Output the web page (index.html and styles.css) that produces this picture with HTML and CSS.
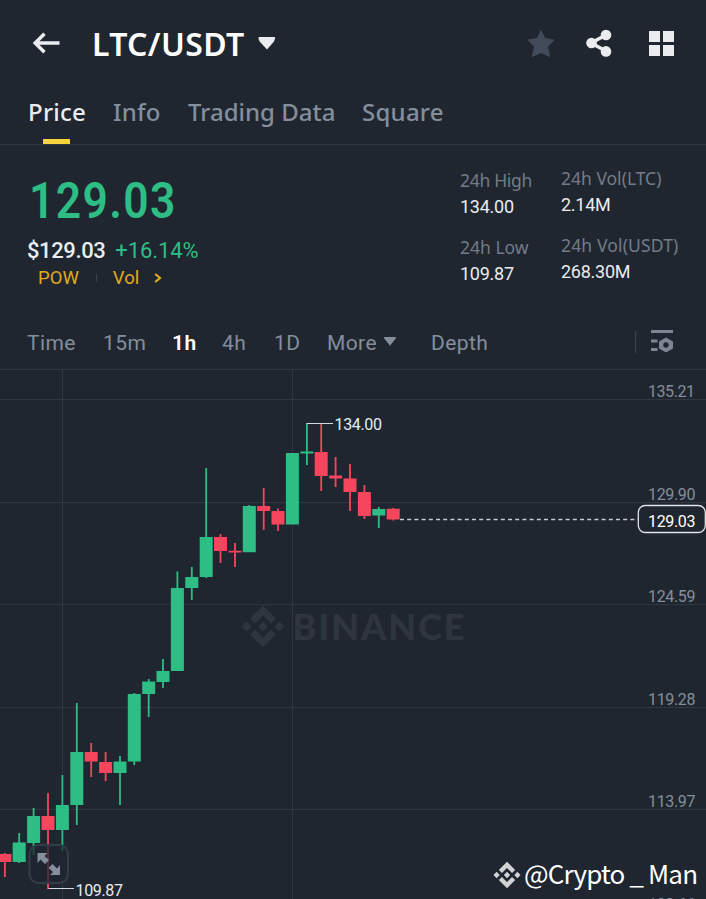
FILE: index.html
```html
<!DOCTYPE html>
<html lang="en">
<head>
<meta charset="utf-8">
<title>LTC/USDT</title>
<link rel="stylesheet" href="styles.css">
</head>
<body>
<header class="topbar">
  <svg class="back" viewBox="0 0 28 22" width="28" height="22"><path d="M27.500 11H3M12.500 1.800L3.200 11l9.300 9.200" fill="none" stroke="#eaecef" stroke-width="3.500"/></svg>
  <h1 class="pair">LTC/USDT</h1>
  <svg class="caret" viewBox="0 0 18 13" width="18" height="13"><path d="M1.500 0h14.800q1.500 0 .7 1.600L16 4.600 9 12.500 1.800 4.800.4 1.600Q0 0 1.500 0z" fill="#eaecef"/></svg>
  <div class="actions">
    <svg viewBox="0 0 28 28" width="28" height="28"><path d="M14 1.500l3.900 8 9 1.500-6.300 6.600 2.100 9.900-8.700-4-8.700 4 2.100-9.900L1.100 11l9-1.500z" fill="#414b5a" stroke="#414b5a" stroke-linejoin="round"/></svg>
    <svg viewBox="0 0 28 28" width="28" height="28"><path d="M21 6L6 14l15 8" fill="none" stroke="#eaecef" stroke-width="3.600"/><g fill="#eaecef"><circle cx="21" cy="6" r="5.300"/><circle cx="6.500" cy="14" r="5.300"/><circle cx="21" cy="22.400" r="5.300"/></g></svg>
    <svg viewBox="0 0 25 25" width="25" height="25"><path d="M0 0h11v11H0zM14 0h11v11H14zM0 14h11v11H0zM14 14h11v11H14z" fill="#eaecef"/></svg>
  </div>
</header>

<nav class="tabs">
  <a class="tab tab-active">Price</a>
  <a class="tab">Info</a>
  <a class="tab trading">Trading Data</a>
  <a class="tab">Square</a>
</nav>

<section class="ticker">
  <div class="quote">
    <div class="last">129.03</div>
    <div class="fiat"><span class="usd">$129.03</span><span class="change">+16.14%</span></div>
    <div class="tags"><span class="pow">POW</span><i class="tag-sep"></i><span>Vol</span><svg viewBox="0 0 8 10" width="8" height="10"><path d="M1.200 1L6 5 1.200 9" fill="none" stroke="#e0a91f" stroke-width="2.200"/></svg></div>
  </div>
  <dl class="stats">
    <div><dt class="tight">24h High</dt><dd>134.00</dd></div>
    <div><dt>24h Low</dt><dd>109.87</dd></div>
  </dl>
  <dl class="stats stats-volume">
    <div><dt>24h Vol(LTC)</dt><dd>2.14M</dd></div>
    <div><dt class="wide">24h Vol(USDT)</dt><dd>268.30M</dd></div>
  </dl>
</section>

<nav class="intervals">
  <span>Time</span><span>15m</span><span class="selected">1h</span><span>4h</span><span>1D</span>
  <span class="more">More<svg viewBox="0 0 12 9" width="12" height="9"><path d="M.5 0h11q.8 0 .2 1.500L6 8.800.3 1.500Q-.3 0 .5 0z" fill="#848e9c"/></svg></span>
  <span>Depth</span>
  <svg class="settings" viewBox="0 0 30 24" width="30" height="24"><path d="M.5 1v22" stroke="#39414d" stroke-width="1.500"/></svg>
  <svg class="gear" viewBox="0 0 22 22" width="22" height="22"><path d="M0 1.500h22M0 11h6.500M0 19.500h6.500" stroke="#7d8593" stroke-width="3"/><path fill-rule="evenodd" d="M15 7.500l7 3.900v7.200L15 22.500l-7-3.900v-7.200zM15 12.300a2.700 2.700 0 1 0 0 5.400 2.700 2.700 0 1 0 0-5.400z" fill="#7d8593"/></svg>
</nav>

<svg class="chart" viewBox="0 369 706 530" width="706" height="530">
  <defs>
    <g id="mark"><path d="M0-21L13-8 8-3 0-11-8-3-13-8zM0 21L13 8 8 3 0 11-8 3-13 8zM0-5L5 0 0 5-5 0zM-16.500-5L-11.500 0-16.500 5-21.500 0zM16.500-5L21.500 0 16.500 5 11.500 0z"/></g>
  </defs>
  <path class="grid" d="M0 369.500H706M0 399.500H706M0 502.500H706M0 604.500H706M0 707.500H706M0 809.500H706M62.500 369V899M292.500 369V899"/>
  <g class="watermark"><use href="#mark" x="263" y="626.500"/><text x="292.500" y="640" textLength="172">BINANCE</text></g>
  <g class="axis">
    <text x="648" y="396.500" textLength="47">135.21</text>
    <text x="648" y="499.500" textLength="47.500">129.90</text>
    <text x="648" y="602" textLength="47.500">124.59</text>
    <text x="648" y="704.500" textLength="47.500">119.28</text>
    <text x="648" y="807" textLength="47.500">113.97</text>
    <text x="648" y="909.500" textLength="47.500">108.66</text>
  </g>
  <g class="up">
    <path class="wick" d="M19.200 833V863M33.600 808V855M62.400 775V851M76.800 703V825M120 756V805M134.300 693V765M148.700 679V717M163 659V688M177.400 571.500V671M191.800 567V600M206.200 468V578M249.300 505V552M292.400 453V524M306.900 423V465M378.800 507V528"/>
    <path class="body" d="M19.200 842.500V862M33.600 816V843M62.400 805V830M76.800 752V805M120 761.500V773M134.300 694V761.500M148.700 681.500V694M163 671V682M177.400 588V671M191.800 577V588M206.200 537V577M249.300 506V552.300M292.400 453V524.500M306.900 451.500V453.500M378.800 509V515.500"/>
  </g>
  <g class="down">
    <path class="wick" d="M4.900 853V877M48 793V889M91.200 743V777M105.600 752V781M220.500 534V563M235 543V567M263.700 488V530M278 508.500V531M321.200 423V491M335.600 457V487M350 464V511M364.400 485V519M393.200 508V520.500"/>
    <path class="body" d="M4.900 854V862M48 816V830M91.200 752V761.500M105.600 762V773M220.500 537V551M235 550.700V552.500M263.700 506V511M278 511V524.500M321.200 452V476M335.600 475.500V478.500M350 478.500V492M364.400 492V516M393.200 508.700V519.500"/>
  </g>
  <g class="expand"><rect x="29.500" y="845" width="38.500" height="38" rx="9"/><path d="M37.500 853H47.500L44.500 856 49 860 45 864 40.500 859.500 37.500 863zM60 875H50L53 872 48.500 868 52.500 864 57 868.500 60 865z"/></g>
  <path d="M306.500 423.500H333M48.500 888.500H74" class="leader"/>
  <g class="marker"><text x="334.500" y="430" textLength="47.500">134.00</text><text x="75.500" y="895.500" textLength="47.500">109.87</text></g>
  <path d="M400 519.500H638" class="last-line"/>
  <g class="last-price"><rect x="638.300" y="505.500" width="67" height="27" rx="7"/><text x="648" y="527" textLength="47.500">129.03</text></g>
  <g class="author"><use href="#mark" transform="translate(507 875) scale(.63)"/><text x="524" y="884" textLength="174">@Crypto _ Man</text></g>
</svg>
</body>
</html>
```
FILE: styles.css
```css
* { box-sizing: border-box; }
body { margin: 0; width: 706px; height: 899px; overflow: hidden; background: #1f2630; color: #eaecef; font-family: Roboto, sans-serif; }
h1, dl, dd, dt { margin: 0; }
svg { display: block; flex: none; }

.topbar { display: flex; align-items: center; height: 88px; padding: 0 32px 2px 31.500px; }
.pair { margin-left: 32.500px; padding-top: 2px; width: 154px; font: 600 32px/40px "Noto Sans", sans-serif; letter-spacing: .35px; color: #fff; white-space: nowrap; }
.caret { margin-left: 12px; }
.actions { display: flex; align-items: center; gap: 30px; margin-left: auto; }
.actions svg:last-child { margin-left: 6px; }

.tabs { display: grid; grid-template-columns: 85px 75px 174px 100px; height: 57px; padding-left: 28px; border-bottom: 1px solid #303843; }
.tab { position: relative; width: max-content; color: #848e9c; font: 500 24px/48px "Noto Sans", sans-serif; letter-spacing: .25px; }
.tab.trading { letter-spacing: 0; }
.tab-active { color: #eaecef; }
.tab-active::after { content: ""; position: absolute; left: 15px; top: 51px; width: 27px; height: 5px; background: #f5d33d; }

.ticker { display: grid; grid-template-columns: 432px 101px 1fr; height: 165px; padding-left: 28px; }
.quote { padding-top: 26px; }
.last { width: max-content; font-size: 50.500px; line-height: 60px; font-weight: 600; color: #2ebd85; letter-spacing: 1.6px; padding-left: 1px; transform: scaleX(.88); transform-origin: 0 50%; }
.fiat { display: flex; gap: 10px; height: 34px; align-items: center; margin-top: 2px; font-size: 22px; }
.usd { margin-left: -1px; font-weight: 500; letter-spacing: -.4px; }
.change { letter-spacing: -.1px; color: #2ebd85; }
.tags { display: flex; align-items: center; padding-left: 10px; height: 21px; font-size: 18.500px; color: #e0a91f; }
.tag-sep { width: 1px; height: 8px; background: #39414d; margin: 0 16px 0 17px; }
.tags svg { margin-left: 15px; }
.stats { padding-top: 22px; }
.stats-volume { padding-top: 20px; }
.stats > div { height: 66.500px; }
.stats dt { position: relative; top: -1px; font: 400 17.500px/28px "Noto Sans", sans-serif; color: #737b88; white-space: nowrap; }
.stats dt.tight { letter-spacing: -.3px; }
.stats dt.wide { letter-spacing: .15px; }
.stats dd { font-size: 18px; line-height: 24px; letter-spacing: -.25px; }

.intervals { display: grid; grid-template-columns: 76px 69px 50px 52px 53px 104px 204px 16px 30px; align-items: center; height: 59px; padding: 4px 0 0 27px; font-size: 21px; color: #848e9c; }
.intervals > span { letter-spacing: .4px; line-height: 28px; padding-top: 2px; }
.intervals .selected { color: #fff; font-weight: 600; }
.more { display: flex; align-items: center; gap: 7px; }
.more svg { margin-bottom: 3px; }
.gear { margin-bottom: 2px; }

.chart text { font-family: Roboto, sans-serif; font-size: 16px; }
.grid { stroke: #303741; stroke-width: 1; fill: none; }
.watermark { fill: #2f353f; }
.chart .watermark text { font-family: Lato, sans-serif; font-size: 36px; font-weight: 900; }
.axis { fill: #848e9c; }
.up { stroke: #2ebd85; }
.down { stroke: #f6465d; }
.wick { stroke-width: 1.800; fill: none; }
.body { stroke-width: 13; fill: none; }
.expand rect { fill: #1f2630; fill-opacity: .72; stroke: #343c47; stroke-width: 2; }
.expand path { fill: #848e9c; }
.leader { stroke: #d5d8dd; fill: none; }
.marker { fill: #eaecef; }
.last-line { stroke: #c5c9cf; stroke-width: 1.300; stroke-dasharray: 4 3.200; fill: none; }
.last-price rect { fill: #1f2630; stroke: #dfe2e6; stroke-width: 1.300; }
.last-price text { fill: #fff; }
.author { fill: #d2d3d5; }
.chart .author text { fill: #fff; font-family: "Noto Sans CJK SC", sans-serif; font-size: 26px; }
```
